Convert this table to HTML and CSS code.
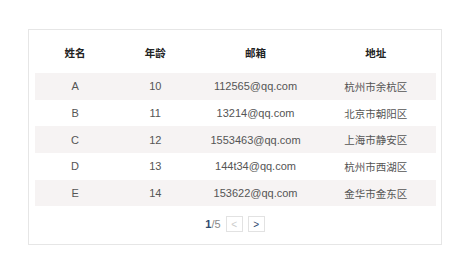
FILE: index.html
```html
<!DOCTYPE html>
<html lang="zh-CN">
<head>
    <meta charset="UTF-8">
    <meta name="viewport" content="width=device-width, initial-scale=1.0">
    <title>用户列表</title>
    <link rel="stylesheet" href="styles.css">
</head>
<body>
    <div class="card">
        <table class="user-table">
            <colgroup>
                <col class="col-name">
                <col class="col-age">
                <col class="col-mail">
                <col class="col-addr">
            </colgroup>
            <thead>
                <tr>
                    <th>姓名</th>
                    <th>年龄</th>
                    <th>邮箱</th>
                    <th>地址</th>
                </tr>
            </thead>
            <tbody>
                <tr><td>A</td><td>10</td><td>112565@qq.com</td><td class="addr">杭州市余杭区</td></tr>
                <tr><td>B</td><td>11</td><td>13214@qq.com</td><td class="addr">北京市朝阳区</td></tr>
                <tr><td>C</td><td>12</td><td>1553463@qq.com</td><td class="addr">上海市静安区</td></tr>
                <tr><td>D</td><td>13</td><td>144t34@qq.com</td><td class="addr">杭州市西湖区</td></tr>
                <tr><td>E</td><td>14</td><td>153622@qq.com</td><td class="addr">金华市金东区</td></tr>
            </tbody>
        </table>
        <div class="pager">
            <span class="pager-info"><b>1</b>/5</span>
            <button class="pager-btn" disabled>&lt;</button>
            <button class="pager-btn">&gt;</button>
        </div>
    </div>
</body>
</html>
```

FILE: styles.css
```css
body {
    margin: 0;
    background-color: #fff;
    font-family: "Liberation Sans", "Noto Sans CJK SC", sans-serif;
    font-size: 11px;
    color: #555;
}
.card {
    box-sizing: border-box;
    width: 414px;
    margin: 29px 0 0 28px;
    padding: 5px 6px 12px 6px;
    border: 1px solid #e6e6e6;
}
.user-table {
    width: 401px;
    border-collapse: collapse;
    table-layout: fixed;
}
.col-name, .col-age { width: 80px; }
.col-mail, .col-addr { width: 120px; }
.user-table th {
    height: 34px;
    padding: 0 0 4px 0;
    font-size: 10.5px;
    font-weight: bold;
    color: #222;
    text-align: center;
}
.user-table td {
    height: 26.7px;
    padding: 0;
    text-align: center;
    font-size: 11px;
    color: #555;
}
.user-table td.addr {
    font-size: 10.5px;
}
.user-table tbody tr:nth-child(odd) {
    background-color: #f6f3f3;
}
.pager {
    display: flex;
    justify-content: center;
    align-items: center;
    gap: 5px;
    margin-top: 10px;
}
.pager-info {
    font-size: 11px;
    color: #888;
}
.pager-info b {
    color: #2d4a6e;
}
.pager-btn {
    box-sizing: border-box;
    width: 17px;
    height: 16px;
    padding: 0;
    border: 1px solid #e2e2e2;
    background-color: #fff;
    font-family: "Liberation Sans", sans-serif;
    font-size: 10px;
    color: #2d4a6e;
}
.pager-btn:disabled {
    color: #ccc;
}
```
